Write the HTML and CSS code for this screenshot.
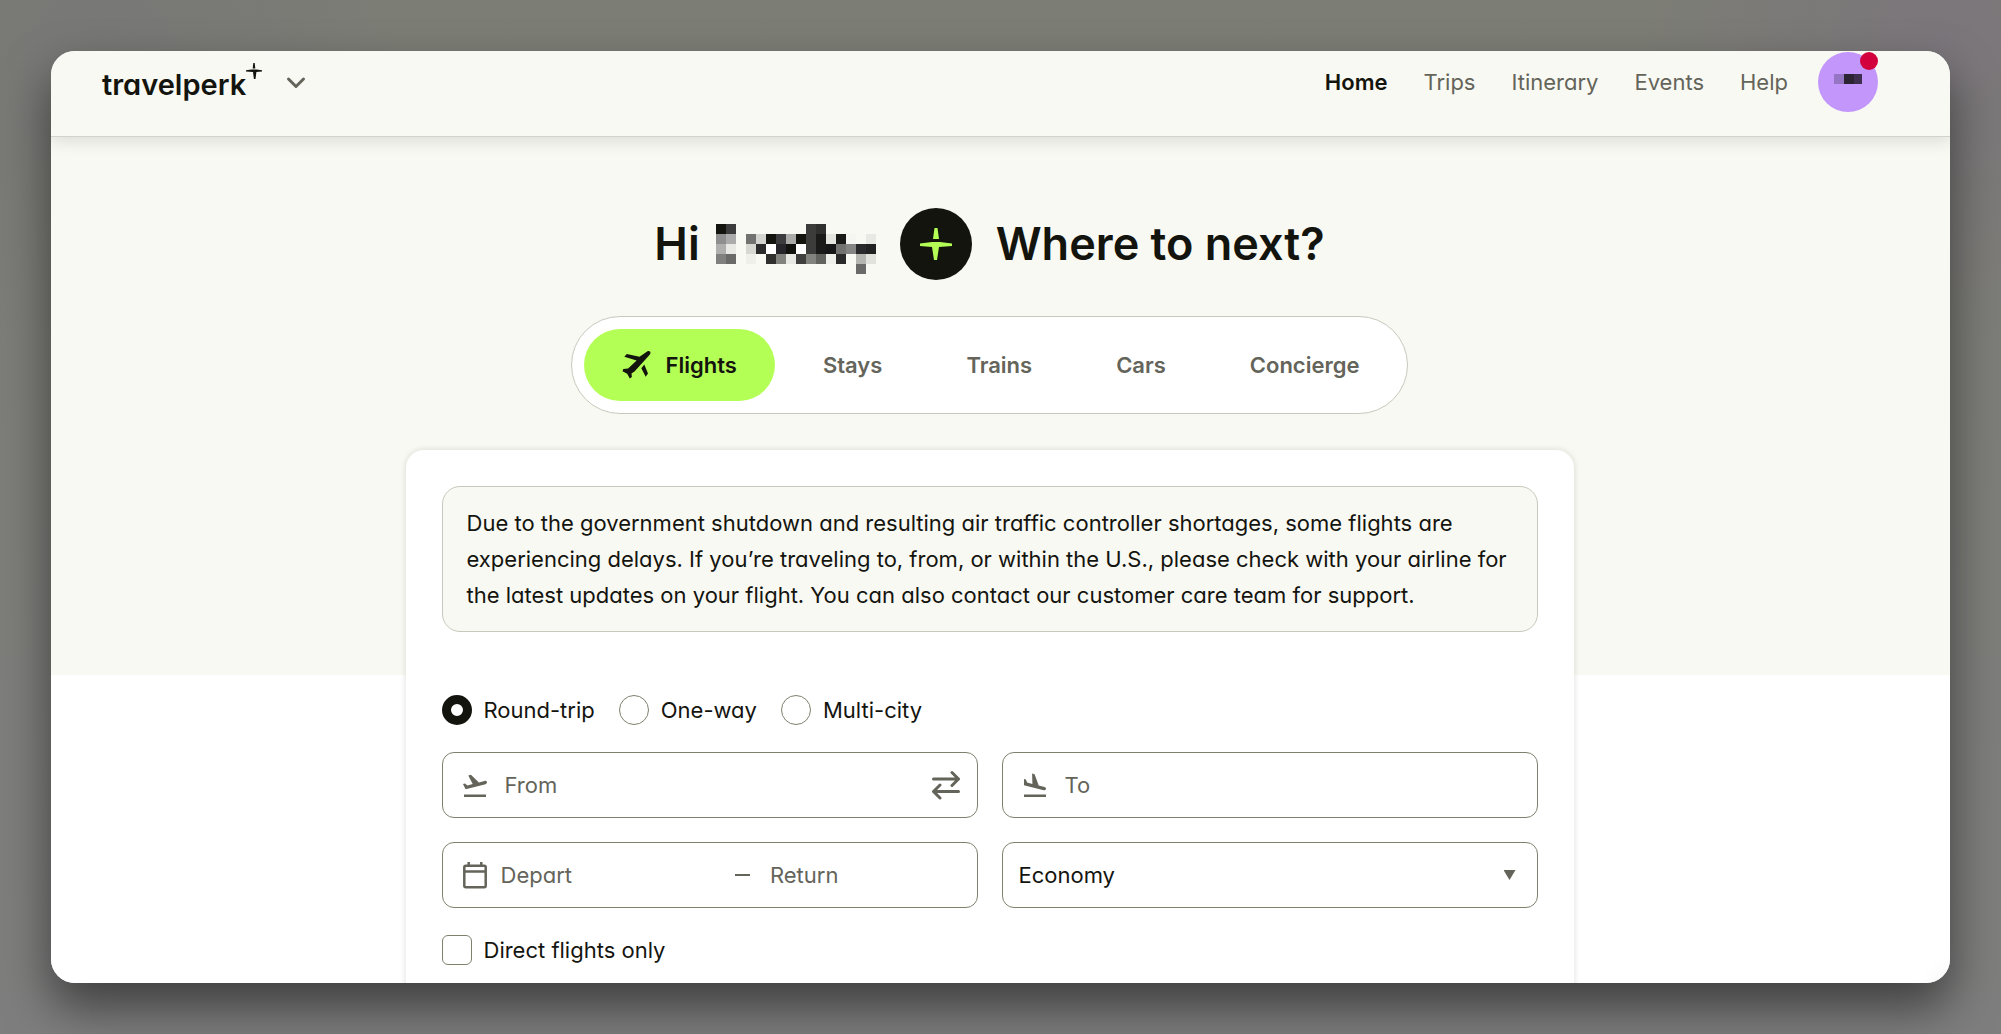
FILE: index.html
```html
<!DOCTYPE html>
<html lang="en">
<head>
<meta charset="utf-8">
<meta name="viewport" content="width=device-width, initial-scale=1">
<title>TravelPerk</title>
<link rel="stylesheet" href="styles.css">
</head>
<body>
<div class="window">
  <header class="topbar">
    <a class="logo" href="#" aria-label="travelperk home">
      <span class="logo-text">travelperk</span>
      <svg class="logo-plus" width="16" height="18" viewBox="0 0 16 18" fill="#14140f" aria-hidden="true"><path d="M7.300 2h1.400l.6 5.400H6.700zM0 9.300l5.500-.8h5l5.500.8v1.200l-5.600.4-.9 7.100h-1.600l-.9-7.100L0 10.500z"/></svg>
    </a>
    <button class="switcher" type="button" aria-label="Switch account">
      <svg width="20" height="14" viewBox="0 0 20 14" fill="none" stroke="#64645a" stroke-width="3" stroke-linecap="round" stroke-linejoin="round" aria-hidden="true"><path d="M2.500 3l7.500 7.500L17.500 3"/></svg>
    </button>
    <nav class="nav" aria-label="Main">
      <a class="nav-link nav-link-active" href="#" aria-current="page">Home</a>
      <a class="nav-link" href="#">Trips</a>
      <a class="nav-link" href="#">Itinerary</a>
      <a class="nav-link" href="#">Events</a>
      <a class="nav-link" href="#">Help</a>
    </nav>
    <button class="avatar" type="button" aria-label="Account">
      <svg width="28" height="16" viewBox="0 0 28 16" shape-rendering="crispEdges" aria-hidden="true"><path fill="#9676c4" d="M0 0h10v10H0z"/><path fill="#2c2333" d="M10 0h10v10H10z"/><path fill="#3d2f4d" d="M20 0h8v10h-8z"/></svg>
      <span class="avatar-dot"></span>
    </button>
  </header>

  <main class="main">
    <h1 class="greeting">
      <span class="greeting-hi">Hi
        <svg class="name-mask" width="160" height="50" viewBox="0 0 16 5" shape-rendering="crispEdges" role="img" aria-label="hidden name">
          <g><path fill="#14140f" d="M0 0h1v1H0z"/><path fill="#3c3c3c" d="M1 0h1v1H1z"/><path fill="#3c3c3b" d="M9 0h1v3H9z"/><path fill="#30302e" d="M10 0h1v1h-1z"/></g>
          <g><path fill="#8f8f8f" d="M0 1h1v1H0z"/><path fill="#ababab" d="M1 1h1v1H1z"/><path fill="#727270" d="M3 1h1v1H3z"/><path fill="#d3d3cf" d="M4 1h1v1H4z"/><path fill="#14140f" d="M5 1h1v1H5z"/><path fill="#3c3c3e" d="M6 1h1v1H6z"/><path fill="#ababa9" d="M7 1h1v1H7z"/><path fill="#14140f" d="M8 1h1v1H8z"/><path fill="#1a1a19" d="M10 1h1v2h-1z"/><path fill="#e5e5e0" d="M11 1h1v1h-1z"/><path fill="#1a1a18" d="M12 1h1v1h-1z"/><path fill="#f5f5f1" d="M13 1h1v1h-1z"/><path fill="#e8e8e4" d="M15 1h1v1h-1z"/></g>
          <g><path fill="#b0b0ae" d="M0 2h1v1H0z"/><path fill="#e8e8e4" d="M1 2h1v1H1z"/><path fill="#d8d8d3" d="M3 2h1v1H3z"/><path fill="#2b2b2b" d="M4 2h1v1H4z"/><path fill="#fff" d="M5 2h1v1H5zM8 2h1v1H8z"/><path fill="#26262a" d="M6 2h1v1H6z"/><path fill="#12120f" d="M7 2h1v1H7z"/><path fill="#161616" d="M11 2h1v1h-1z"/><path fill="#727270" d="M12 2h1v1h-1z"/><path fill="#858583" d="M13 2h1v1h-1z"/><path fill="#2a2a2c" d="M14 2h1v1h-1z"/><path fill="#222" d="M15 2h1v1h-1z"/></g>
          <g><path fill="#80807e" d="M0 3h1v1H0z"/><path fill="#6a6a68" d="M1 3h1v1H1zM14 4h1v1h-1z"/><path fill="#f0f0eb" d="M3 3h1v1H3zM11 3h1v1h-1z"/><path fill="#30302e" d="M5 3h1v1H5z"/><path fill="#82827f" d="M6 3h1v1H6zM9 3h1v1H9z"/><path fill="#e8e8e4" d="M7 3h1v1H7z"/><path fill="#3f3f3d" d="M8 3h1v1H8z"/><path fill="#62625f" d="M10 3h1v1h-1z"/><path fill="#2a2a2a" d="M12 3h1v1h-1z"/><path fill="#b5b5b1" d="M14 3h1v1h-1z"/><path fill="#e2e2dd" d="M15 3h1v1h-1z"/></g>
        </svg>
      </span>
      <svg class="greeting-badge" width="72" height="72" viewBox="0 0 72 72" aria-hidden="true"><circle cx="36" cy="36" r="36" fill="#14140f"/><path fill="#b4ff55" d="M34.500 20h3l1.500 11h-6zM20 35.500l12-1.500h8l12 1.500v2.500l-13 1-2 13h-3l-2-13-12-1z"/></svg>
      <span>Where to next?</span>
    </h1>

    <div class="tabs" role="tablist" aria-label="Travel type">
      <button class="tab tab-active" type="button" role="tab" aria-selected="true">
        <svg width="30" height="30" viewBox="0 0 30 30" fill="#14140f" aria-hidden="true"><path d="M25.500 1.300c1.600-1 3.500.3 2.900 2.100-.3.900-1 1.700-1.800 2.500L12.500 21.500l-3 2 .4 3.500-2.100 1.500-2.600-4.700L.5 21.200l.8-2.300 4.800-.3 8.500-8.200L2.300 6.800l2.500-2.700 12.700 2.700zM19.300 18.300l3-3.800L26 23.500l-2.300 3.200z"/></svg>
        <span>Flights</span>
      </button>
      <button class="tab" type="button" role="tab" aria-selected="false">Stays</button>
      <button class="tab" type="button" role="tab" aria-selected="false">Trains</button>
      <button class="tab" type="button" role="tab" aria-selected="false">Cars</button>
      <button class="tab" type="button" role="tab" aria-selected="false">Concierge</button>
    </div>

    <form class="card">
      <p class="notice">Due to the government shutdown and resulting air traffic controller shortages, some flights are experiencing delays. If you’re traveling to, from, or within the U.S., please check with your airline for the latest updates on your flight. You can also contact our customer care team for support.</p>

      <div class="trip-types" role="radiogroup" aria-label="Trip type">
        <label class="choice"><input class="radio" type="radio" name="trip" checked>Round-trip</label>
        <label class="choice"><input class="radio" type="radio" name="trip">One-way</label>
        <label class="choice"><input class="radio" type="radio" name="trip">Multi-city</label>
      </div>

      <div class="fields">
        <div class="field">
          <svg width="28" height="28" viewBox="0 0 28 28" fill="#64645a" aria-hidden="true"><path d="M3 23.500h22v2.500H3zM2 13l2-.5 2.400 2 5.300-1.400L7.300 4.500l2.600-.7 8 7.600 5.600-1.500c1.100-.3 2.100.2 2.400 1.100.2 1-.4 1.900-1.400 2.200L4.600 18.300z"/></svg>
          <input class="input" type="text" placeholder="From" aria-label="From">
          <button class="swap" type="button" aria-label="Swap origin and destination">
            <svg width="30" height="30" viewBox="0 0 30 30" fill="none" stroke="#64645a" stroke-width="3" stroke-linecap="round" stroke-linejoin="round" aria-hidden="true"><path d="M2.500 9h25M21 2.500L27.500 9 21 15.500M27.500 21.500h-25M9 15l-6.500 6.500L9 28"/></svg>
          </button>
        </div>
        <div class="field">
          <svg width="28" height="28" viewBox="0 0 28 28" fill="#64645a" aria-hidden="true"><path d="M3 23.500h22v2.500H3zM3 8l1.900.5 1.200 3 5.300 1.400-.3-10.400 2.500.7 4.100 11.200 5.800 1.500c1.100.3 1.700 1.200 1.400 2.200-.2.900-1.200 1.400-2.200 1.200L3 14.300z"/></svg>
          <input class="input" type="text" placeholder="To" aria-label="To">
        </div>
        <div class="field field-dates">
          <svg width="28" height="28" viewBox="0 0 28 28" fill="none" stroke="#64645a" stroke-width="2.500" aria-hidden="true"><rect x="3.300" y="4.800" width="21.400" height="21.400" rx="1.500"/><path d="M3 10.500h22M7.700 1v4M20.300 1v4"/></svg>
          <input class="input input-depart" type="text" placeholder="Depart" aria-label="Depart">
          <span class="dash"></span>
          <input class="input input-return" type="text" placeholder="Return" aria-label="Return">
        </div>
        <div class="select-wrap">
          <select class="select" aria-label="Cabin class">
            <option>Economy</option>
            <option>Premium economy</option>
            <option>Business</option>
            <option>First</option>
          </select>
        </div>
      </div>

      <label class="choice"><input class="checkbox" type="checkbox">Direct flights only</label>
    </form>
  </main>
  <button class="chat" type="button" aria-label="Open chat"></button>
</div>
</body>
</html>
```
FILE: styles.css
```css
:root {
  --ink: #14140f;
  --muted: #64645a;
  --line: #80806f;
  --line-soft: #c8c8bc;
  --sand: #f8f9f2;
  --lime: #b4ff55;
}

* {
  box-sizing: border-box;
}

body {
  margin: 0;
  padding: 51px;
  height: 100vh;
  overflow: hidden;
  background:
    radial-gradient(circle at 97% 4%, #7b767b, transparent 300px),
    radial-gradient(circle at 5% 6%, #777776, transparent 300px),
    #7d7e78 linear-gradient(#7c7d75, #7e7e7e);
  color: var(--ink);
  font: 22px/36px Inter, "Liberation Sans", sans-serif;
  font-feature-settings: "cv11";
}

button,
input,
select {
  margin: 0;
  padding: 0;
  border: 0;
  background: none;
  color: inherit;
  font: inherit;
  font-feature-settings: inherit;
}

a {
  color: inherit;
  text-decoration: none;
}

svg {
  display: block;
  flex: none;
}

.window {
  position: relative;
  display: flex;
  flex-direction: column;
  height: 100%;
  overflow: hidden;
  border-radius: 24px;
  background: #fff;
  box-shadow: 0 24px 48px rgba(0, 0, 0, 0.5);
}

/* Top bar */
.topbar {
  position: relative;
  z-index: 1;
  display: flex;
  flex: none;
  align-items: center;
  height: 86px;
  padding: 0 72px 24px 51px;
  border-bottom: 1px solid #d2d3ca;
  background: var(--sand);
  box-shadow: 0 4px 16px rgba(20, 20, 15, 0.12);
}

.logo {
  display: flex;
  align-items: flex-start;
}

.logo-text {
  padding-top: 6px;
  font-size: 29px;
  font-weight: 600;
}

.switcher {
  margin-left: 24px;
  padding-top: 2px;
}

.nav {
  display: flex;
  gap: 36px;
  margin-left: auto;
}

.nav-link {
  color: var(--muted);
}

.nav-link-active {
  color: var(--ink);
  font-weight: 600;
}

.avatar {
  position: relative;
  display: grid;
  flex: none;
  place-items: center;
  width: 60px;
  height: 60px;
  margin-left: 30px;
  border-radius: 50%;
  background: #c296fb;
}

.avatar-dot {
  position: absolute;
  top: 0;
  right: 0;
  width: 18px;
  height: 18px;
  border-radius: 50%;
  background: #d2003c;
}

/* Hero */
.main {
  display: flex;
  flex: 1;
  flex-direction: column;
  align-items: center;
  min-height: 0;
  padding: 71px 22px 0 0;
  background: linear-gradient(var(--sand) 538px, #fff 538px);
}

.greeting {
  display: flex;
  flex: none;
  gap: 24px;
  align-items: center;
  height: 72px;
  margin: 0 0 36px;
  font-size: 45px;
  font-weight: 600;
  line-height: 72px;
}

.greeting-hi {
  display: flex;
  gap: 16px;
  align-items: center;
}

.name-mask {
  margin-top: 10px;
}

.tabs {
  display: flex;
  flex: none;
  gap: 12px;
  padding: 12px;
  border: 1px solid var(--line-soft);
  border-radius: 49px;
  background: #fff;
  font-feature-settings: normal;
}

.tab {
  display: flex;
  gap: 14px;
  align-items: center;
  height: 72px;
  padding: 0 36px;
  border-radius: 36px;
  color: var(--muted);
  font-weight: 600;
}

.tab-active {
  padding: 0 38px;
  background: var(--lime);
  color: var(--ink);
}

/* Search card */
.card {
  flex: none;
  width: 100%;
  max-width: 1168px;
  margin-top: 36px;
  padding: 36px 36px 72px;
  border-radius: 18px;
  background: #fff;
  box-shadow: 0 0 6px rgba(20, 20, 15, 0.14);
}

.notice {
  margin: 0;
  padding: 18px 24px;
  border: 1px solid var(--line-soft);
  border-radius: 18px;
  background: var(--sand);
}

.trip-types {
  display: flex;
  gap: 24px;
  margin: 60px 0 24px;
}

.choice {
  display: flex;
  gap: 12px;
  align-items: center;
}

.radio,
.checkbox {
  flex: none;
  width: 30px;
  height: 30px;
  appearance: none;
  border: 1px solid var(--line);
  border-radius: 50%;
  background: #fff;
}

.radio:checked {
  border: 9px solid var(--ink);
}

.checkbox {
  border-radius: 6px;
}

.fields {
  display: grid;
  grid-template-columns: repeat(2, minmax(0, 1fr));
  gap: 24px;
  margin-bottom: 24px;
}

.field {
  display: flex;
  gap: 16px;
  align-items: center;
  height: 66px;
  padding: 0 16px 0 18px;
  border: 1px solid var(--line);
  border-radius: 12px;
}

.field-dates {
  gap: 12px;
}

.input {
  flex: 1;
  min-width: 0;
  height: 36px;
}

.input-depart {
  flex-grow: 7;
}

.input-return {
  flex-grow: 6;
}

.input::placeholder {
  color: var(--muted);
  opacity: 1;
}

.dash {
  width: 15px;
  height: 2px;
  margin-right: 8px;
  background: var(--muted);
}

.select-wrap {
  display: grid;
  align-items: center;
}

.select-wrap::after {
  content: "";
  grid-area: 1 / 1;
  justify-self: end;
  width: 12px;
  height: 10px;
  margin-right: 22px;
  background: var(--muted);
  clip-path: polygon(0 0, 100% 0, 50% 100%);
  pointer-events: none;
}

.select {
  grid-area: 1 / 1;
  width: 100%;
  height: 66px;
  padding: 0 48px 0 16px;
  appearance: none;
  border: 1px solid var(--line);
  border-radius: 12px;
}

/* Chat launcher, tucked into the corner of the window */
.chat {
  position: absolute;
  right: -58px;
  bottom: -58px;
  width: 72px;
  height: 72px;
  border-radius: 50%;
  background: #fff;
  box-shadow: 0 0 2px rgba(0, 0, 0, 0.3), 0 0 24px rgba(0, 0, 0, 0.1);
}
```
